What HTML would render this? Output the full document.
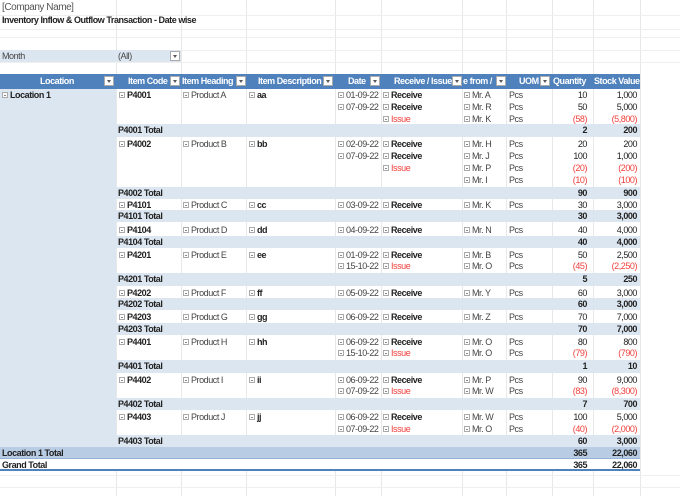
<!DOCTYPE html>
<html><head><meta charset="utf-8"><style>
*{margin:0;padding:0;box-sizing:border-box}
body{width:680px;height:496px;background:#fff;position:relative;overflow:hidden;font-family:"Liberation Sans",sans-serif;font-size:9px;letter-spacing:-0.45px;color:#222}
.g{position:absolute;top:0;bottom:0;width:1px;background:#e8e8e8}
.hl{position:absolute;left:0;right:0;height:1px;background:#efefef}
.r{position:absolute;left:0;width:640px;height:12px;line-height:12px}
.r span{position:absolute;white-space:nowrap}
.st{background:#dce6f1;left:116px;width:524px}
.st .b{left:2px;font-weight:bold}
.a{left:2px}.b{left:119px}.h{left:183px;color:#444}.d{left:249px;font-weight:bold}.dt{left:338px;color:#444}.ri{left:383px;font-weight:bold}.f{left:464px;color:#444}.u{left:509px;color:#444}
.q{right:53px;text-align:right}.v{right:3px;text-align:right}
.st .q{right:53px;font-weight:bold}.st .v{right:3px;font-weight:bold}
.red{color:#f0403c!important;font-weight:normal}
.ri.red{font-weight:normal}
.m{display:inline-block;width:6px;height:6px;border:1px solid #aaa;margin-right:2px;position:relative;background:#fff}
.m:after{content:"";position:absolute;left:1px;right:1px;top:2px;height:1px;background:#888}
.hdr{position:absolute;top:74px;left:0;width:640px;height:15px;background:#4f81bd;color:#fff;font-weight:bold;line-height:15px}
.hdr span{position:absolute;white-space:nowrap}
.dd{position:absolute;width:10px;height:10px;background:#fff;border:1px solid #aaa;top:2px}
.dd:after{content:"";position:absolute;left:2px;top:3px;border-left:2.5px solid transparent;border-right:2.5px solid transparent;border-top:3px solid #555}
</style></head><body>
<div class="g" style="left:116px"></div><div class="g" style="left:181px"></div><div class="g" style="left:246px"></div><div class="g" style="left:335px"></div><div class="g" style="left:381px"></div><div class="g" style="left:462px"></div><div class="g" style="left:506px"></div><div class="g" style="left:552px"></div><div class="g" style="left:593px"></div><div class="g" style="left:640px"></div>
<div class="hl" style="top:15px"></div><div class="hl" style="top:29px"></div><div class="hl" style="top:37px"></div><div class="hl" style="top:50px"></div><div class="hl" style="top:62px"></div>
<div class="hl" style="top:475px"></div><div class="hl" style="top:487px"></div>
<div style="position:absolute;left:2px;top:2px;color:#555;font-size:10px">[Company Name]</div>
<div style="position:absolute;left:2px;top:15px;font-weight:bold">Inventory Inflow &amp; Outflow Transaction - Date wise</div>
<div style="position:absolute;left:0;top:50px;width:181px;height:12px;background:#dce6f1"></div>
<div style="position:absolute;left:2px;top:51px;color:#444">Month</div>
<div style="position:absolute;left:118px;top:51px;color:#444">(All)</div>
<div class="dd" style="left:170px;top:51px"></div>
<div style="position:absolute;left:0;top:89px;width:116px;height:358px;background:#dce6f1"></div>
<div class="hdr">
<span style="left:40px">Location</span><div class="dd" style="left:104px"></div>
<span style="left:128px">Item Code</span><div class="dd" style="left:170px"></div>
<span style="left:182px">Item Heading</span><div class="dd" style="left:236px"></div>
<span style="left:258px">Item Description</span><div class="dd" style="left:323px"></div>
<span style="left:348px">Date</span><div class="dd" style="left:370px"></div>
<span style="left:394px">Receive / Issue</span><div class="dd" style="left:452px;z-index:2"></div>
<span style="left:463px">e from /</span><div class="dd" style="left:496px"></div>
<span style="left:519px">UOM</span><div class="dd" style="left:540px"></div>
<span style="left:553px">Quantity</span>
<span style="left:594px">Stock Value</span>
</div>

<div class="r" style="top:89px"><span class="a" style="font-weight:bold"><i class="m"></i>Location 1</span><span class="b" style="font-weight:bold"><i class="m"></i>P4001</span><span class="h"><i class="m"></i>Product A</span><span class="d"><i class="m"></i>aa</span><span class="dt"><i class="m"></i>01-09-22</span><span class="ri"><i class="m"></i>Receive</span><span class="f"><i class="m"></i>Mr. A</span><span class="u">Pcs</span><span class="q">10</span><span class="v">1,000</span></div>
<div class="r" style="top:101px"><span class="dt"><i class="m"></i>07-09-22</span><span class="ri"><i class="m"></i>Receive</span><span class="f"><i class="m"></i>Mr. R</span><span class="u">Pcs</span><span class="q">50</span><span class="v">5,000</span></div>
<div class="r" style="top:113px"><span class="ri red"><i class="m"></i>Issue</span><span class="f"><i class="m"></i>Mr. K</span><span class="u">Pcs</span><span class="q red">(58)</span><span class="v red">(5,800)</span></div>
<div class="r st" style="top:124px;height:13px"><span class="b">P4001 Total</span><span class="q">2</span><span class="v">200</span></div>
<div class="r" style="top:138px"><span class="b" style="font-weight:bold"><i class="m"></i>P4002</span><span class="h"><i class="m"></i>Product B</span><span class="d"><i class="m"></i>bb</span><span class="dt"><i class="m"></i>02-09-22</span><span class="ri"><i class="m"></i>Receive</span><span class="f"><i class="m"></i>Mr. H</span><span class="u">Pcs</span><span class="q">20</span><span class="v">200</span></div>
<div class="r" style="top:150px"><span class="dt"><i class="m"></i>07-09-22</span><span class="ri"><i class="m"></i>Receive</span><span class="f"><i class="m"></i>Mr. J</span><span class="u">Pcs</span><span class="q">100</span><span class="v">1,000</span></div>
<div class="r" style="top:162px"><span class="ri red"><i class="m"></i>Issue</span><span class="f"><i class="m"></i>Mr. P</span><span class="u">Pcs</span><span class="q red">(20)</span><span class="v red">(200)</span></div>
<div class="r" style="top:174px"><span class="f"><i class="m"></i>Mr. I</span><span class="u">Pcs</span><span class="q red">(10)</span><span class="v red">(100)</span></div>
<div class="r st" style="top:187px"><span class="b">P4002 Total</span><span class="q">90</span><span class="v">900</span></div>
<div class="r" style="top:199px"><span class="b" style="font-weight:bold"><i class="m"></i>P4101</span><span class="h"><i class="m"></i>Product C</span><span class="d"><i class="m"></i>cc</span><span class="dt"><i class="m"></i>03-09-22</span><span class="ri"><i class="m"></i>Receive</span><span class="f"><i class="m"></i>Mr. K</span><span class="u">Pcs</span><span class="q">30</span><span class="v">3,000</span></div>
<div class="r st" style="top:210px"><span class="b">P4101 Total</span><span class="q">30</span><span class="v">3,000</span></div>
<div class="r" style="top:224px"><span class="b" style="font-weight:bold"><i class="m"></i>P4104</span><span class="h"><i class="m"></i>Product D</span><span class="d"><i class="m"></i>dd</span><span class="dt"><i class="m"></i>04-09-22</span><span class="ri"><i class="m"></i>Receive</span><span class="f"><i class="m"></i>Mr. N</span><span class="u">Pcs</span><span class="q">40</span><span class="v">4,000</span></div>
<div class="r st" style="top:236px"><span class="b">P4104 Total</span><span class="q">40</span><span class="v">4,000</span></div>
<div class="r" style="top:249px"><span class="b" style="font-weight:bold"><i class="m"></i>P4201</span><span class="h"><i class="m"></i>Product E</span><span class="d"><i class="m"></i>ee</span><span class="dt"><i class="m"></i>01-09-22</span><span class="ri"><i class="m"></i>Receive</span><span class="f"><i class="m"></i>Mr. B</span><span class="u">Pcs</span><span class="q">50</span><span class="v">2,500</span></div>
<div class="r" style="top:260px"><span class="dt"><i class="m"></i>15-10-22</span><span class="ri red"><i class="m"></i>Issue</span><span class="f"><i class="m"></i>Mr. O</span><span class="u">Pcs</span><span class="q red">(45)</span><span class="v red">(2,250)</span></div>
<div class="r st" style="top:273px;height:13px"><span class="b">P4201 Total</span><span class="q">5</span><span class="v">250</span></div>
<div class="r" style="top:287px"><span class="b" style="font-weight:bold"><i class="m"></i>P4202</span><span class="h"><i class="m"></i>Product F</span><span class="d"><i class="m"></i>ff</span><span class="dt"><i class="m"></i>05-09-22</span><span class="ri"><i class="m"></i>Receive</span><span class="f"><i class="m"></i>Mr. Y</span><span class="u">Pcs</span><span class="q">60</span><span class="v">3,000</span></div>
<div class="r st" style="top:298px"><span class="b">P4202 Total</span><span class="q">60</span><span class="v">3,000</span></div>
<div class="r" style="top:311px"><span class="b" style="font-weight:bold"><i class="m"></i>P4203</span><span class="h"><i class="m"></i>Product G</span><span class="d"><i class="m"></i>gg</span><span class="dt"><i class="m"></i>06-09-22</span><span class="ri"><i class="m"></i>Receive</span><span class="f"><i class="m"></i>Mr. Z</span><span class="u">Pcs</span><span class="q">70</span><span class="v">7,000</span></div>
<div class="r st" style="top:323px"><span class="b">P4203 Total</span><span class="q">70</span><span class="v">7,000</span></div>
<div class="r" style="top:336px"><span class="b" style="font-weight:bold"><i class="m"></i>P4401</span><span class="h"><i class="m"></i>Product H</span><span class="d"><i class="m"></i>hh</span><span class="dt"><i class="m"></i>06-09-22</span><span class="ri"><i class="m"></i>Receive</span><span class="f"><i class="m"></i>Mr. O</span><span class="u">Pcs</span><span class="q">80</span><span class="v">800</span></div>
<div class="r" style="top:347px"><span class="dt"><i class="m"></i>15-10-22</span><span class="ri red"><i class="m"></i>Issue</span><span class="f"><i class="m"></i>Mr. O</span><span class="u">Pcs</span><span class="q red">(79)</span><span class="v red">(790)</span></div>
<div class="r st" style="top:360px;height:13px"><span class="b">P4401 Total</span><span class="q">1</span><span class="v">10</span></div>
<div class="r" style="top:374px"><span class="b" style="font-weight:bold"><i class="m"></i>P4402</span><span class="h"><i class="m"></i>Product I</span><span class="d"><i class="m"></i>ii</span><span class="dt"><i class="m"></i>06-09-22</span><span class="ri"><i class="m"></i>Receive</span><span class="f"><i class="m"></i>Mr. P</span><span class="u">Pcs</span><span class="q">90</span><span class="v">9,000</span></div>
<div class="r" style="top:385px"><span class="dt"><i class="m"></i>07-09-22</span><span class="ri red"><i class="m"></i>Issue</span><span class="f"><i class="m"></i>Mr. W</span><span class="u">Pcs</span><span class="q red">(83)</span><span class="v red">(8,300)</span></div>
<div class="r st" style="top:398px"><span class="b">P4402 Total</span><span class="q">7</span><span class="v">700</span></div>
<div class="r" style="top:411px"><span class="b" style="font-weight:bold"><i class="m"></i>P4403</span><span class="h"><i class="m"></i>Product J</span><span class="d"><i class="m"></i>jj</span><span class="dt"><i class="m"></i>06-09-22</span><span class="ri"><i class="m"></i>Receive</span><span class="f"><i class="m"></i>Mr. W</span><span class="u">Pcs</span><span class="q">100</span><span class="v">5,000</span></div>
<div class="r" style="top:423px"><span class="dt"><i class="m"></i>07-09-22</span><span class="ri red"><i class="m"></i>Issue</span><span class="f"><i class="m"></i>Mr. O</span><span class="u">Pcs</span><span class="q red">(40)</span><span class="v red">(2,000)</span></div>
<div class="r st" style="top:435px"><span class="b">P4403 Total</span><span class="q">60</span><span class="v">3,000</span></div>
<div class="r" style="top:447px;background:#b8cce4;border-bottom:1px solid #95b3d7"><span class="a" style="font-weight:bold">Location 1 Total</span><span class="q" style="font-weight:bold">365</span><span class="v" style="font-weight:bold">22,060</span></div>
<div class="r" style="top:459px;height:12px;border-bottom:2px solid #4f81bd;background:#fff"><span class="a" style="font-weight:bold">Grand Total</span><span class="q" style="font-weight:bold">365</span><span class="v" style="font-weight:bold">22,060</span></div>
</body></html>
